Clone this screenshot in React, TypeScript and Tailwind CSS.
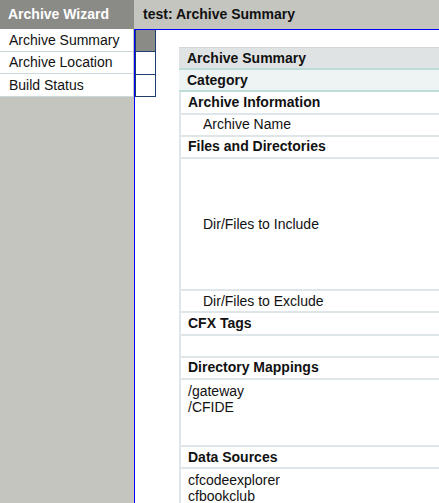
const menu = ['Archive Summary', 'Archive Location', 'Build Status'];

function Row({ children, className = '' }: { children?: React.ReactNode; className?: string }) {
  return (
    <div className={`border-l-2 border-b-2 border-[#dfe6e9] bg-white pl-[7px] ${className}`}>
      {children}
    </div>
  );
}

function Heading({ text }: { text: string }) {
  return (
    <Row className="h-[22.25px] flex items-center font-bold">
      {text}
    </Row>
  );
}

function Field({ text, tall = false }: { text: string; tall?: boolean }) {
  return (
    <Row className={`${tall ? 'h-[132px]' : 'h-[22.25px]'} flex items-center pl-[22px]`}>
      {text}
    </Row>
  );
}

function ListCell({ items, height }: { items: string[]; height: string }) {
  return (
    <Row className={`${height} pt-[3px] leading-[16px]`}>
      {items.map((i) => (
        <div key={i}>{i}</div>
      ))}
    </Row>
  );
}

export default function App() {
  return (
    <div className="flex flex-col h-screen overflow-hidden font-['Liberation_Sans',Arial,sans-serif] text-[14px] text-[#111]">
      <div className="flex h-[29px] shrink-0 font-bold">
        <div className="w-[134px] bg-[#8a8a86] text-white pl-2 flex items-center">Archive Wizard</div>
        <div className="flex-1 bg-[#c5c5c0] pl-[9px] flex items-center">test: Archive Summary</div>
      </div>
      <div className="flex flex-1 min-h-0">
        <div className="w-[134px] shrink-0 bg-[#c5c5c0]">
          <div className="w-[133px] bg-white">
            {menu.map((m) => (
              <div key={m} className="h-[22.5px] border-b border-[#cfd8dc] pl-[9px] pt-[1px] flex items-center">
                {m}
              </div>
            ))}
          </div>
        </div>
        <div className="flex-1 min-w-0 flex border-l border-t border-[#0000ff] bg-white overflow-hidden">
          <div className="w-[21px] shrink-0">
            <div className="h-[22px] bg-[#8a8a86] border-x border-b border-[#1c3f6e]" />
            <div className="h-[23px] bg-white border-x border-b border-[#1c3f6e]" />
            <div className="h-[22px] bg-white border-x border-b border-[#1c3f6e]" />
          </div>
          <div className="ml-[23px] mt-[17px] w-[420px] shrink-0">
            <div className="h-[23px] bg-[#e0e3e3] border-t border-[#d2d7d7] border-b-2 border-b-[#bddcd9] pl-[8px] flex items-center font-bold">
              Archive Summary
            </div>
            <div className="h-[22.25px] bg-[#eef3f3] border-b-2 border-[#bddcd9] pl-[8px] flex items-center font-bold">
              Category
            </div>
            <Heading text="Archive Information" />
            <Field text="Archive Name" />
            <Heading text="Files and Directories" />
            <Field text="Dir/Files to Include" tall />
            <Field text="Dir/Files to Exclude" />
            <Heading text="CFX Tags" />
            <Row className="h-[22.25px]" />
            <Heading text="Directory Mappings" />
            <ListCell items={['/gateway', '/CFIDE']} height="h-[67px]" />
            <Heading text="Data Sources" />
            <ListCell items={['cfcodeexplorer', 'cfbookclub']} height="h-[60px]" />
          </div>
        </div>
      </div>
    </div>
  );
}
